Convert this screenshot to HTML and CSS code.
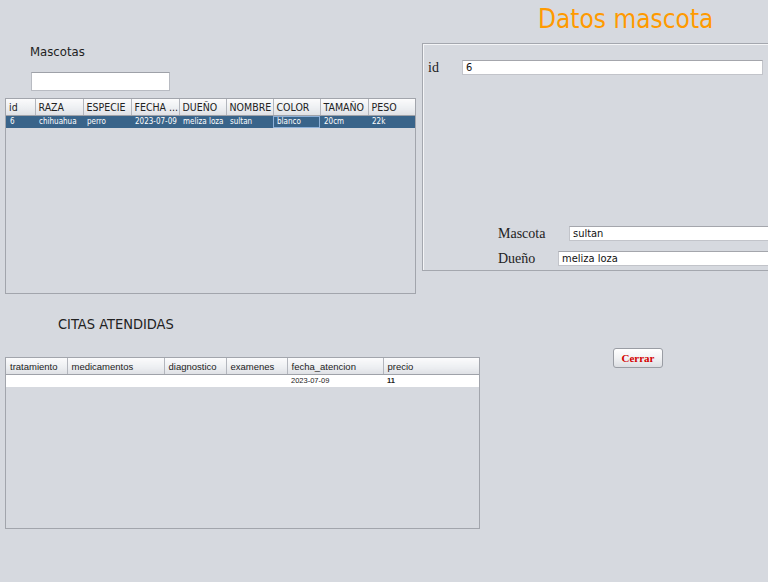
FILE: index.html
```html
<!DOCTYPE html>
<html>
<head>
  <title>Datos mascota</title>
  <link rel="stylesheet" href="styles.css">
</head>
<body>

  <div class="top">
    <div class="left">
      <div class="label-big">Mascotas</div>
      <input class="search" type="text">

      <div class="grid grid-pets">
        <table>
          <colgroup>
            <col style="width:29px"><col style="width:48px"><col style="width:48px"><col style="width:48px">
            <col style="width:47px"><col style="width:47px"><col style="width:47px"><col style="width:48px"><col>
          </colgroup>
          <thead>
            <tr>
              <th>id</th><th>RAZA</th><th>ESPECIE</th><th>FECHA ...</th><th>DUEÑO</th>
              <th>NOMBRE</th><th>COLOR</th><th>TAMAÑO</th><th>PESO</th>
            </tr>
          </thead>
          <tbody>
            <tr class="selected">
              <td>6</td><td>chihuahua</td><td>perro</td><td>2023-07-09</td><td>meliza loza</td>
              <td>sultan</td><td class="focus">blanco</td><td>20cm</td><td>22k</td>
            </tr>
          </tbody>
        </table>
      </div>
    </div>

    <div class="right">
      <div class="title">Datos mascota</div>
      <div class="panel">
        <div class="field">
          <span class="field-label w-id">id</span>
          <input class="field-input w-long" type="text" value="6">
        </div>
        <div class="field field-bottom">
          <span class="field-label w-mascota">Mascota</span>
          <input class="field-input w-wide" type="text" value="sultan">
        </div>
        <div class="field">
          <span class="field-label w-dueno">Dueño</span>
          <input class="field-input w-wide" type="text" value="meliza loza">
        </div>
      </div>
    </div>
  </div>

  <div class="bottom">
    <div class="left-wide">
      <div class="label-big citas">CITAS ATENDIDAS</div>

      <div class="grid grid-citas">
        <table>
          <colgroup>
            <col style="width:61px"><col style="width:97px"><col style="width:62px">
            <col style="width:61px"><col style="width:96px"><col>
          </colgroup>
          <thead>
            <tr>
              <th>tratamiento</th><th>medicamentos</th><th>diagnostico</th>
              <th>examenes</th><th>fecha_atencion</th><th>precio</th>
            </tr>
          </thead>
          <tbody>
            <tr class="plain">
              <td></td><td></td><td></td><td></td><td>2023-07-09</td><td class="strong">11</td>
            </tr>
          </tbody>
        </table>
      </div>
    </div>

    <div class="actions">
      <button class="btn-close">Cerrar</button>
    </div>
  </div>

</body>
</html>
```

FILE: styles.css
```css
html, body {
  margin: 0;
  padding: 0;
  width: 768px;
  height: 582px;
  overflow: hidden;
}
body {
  background-color: #d6d9df;
  font-family: "DejaVu Sans Condensed", "DejaVu Sans", sans-serif;
  color: #222;
}

/* top half */
.top {
  display: flex;
  height: 294px;
}
.left {
  width: 422px;
  flex: none;
  padding-left: 5px;
  box-sizing: border-box;
}
.label-big {
  font-size: 13px;
  line-height: 16px;
  margin: 44px 0 0 25px;
}
.search {
  display: block;
  box-sizing: border-box;
  width: 139px;
  height: 19px;
  margin: 12px 0 0 26px;
  padding: 0 3px;
  background: #fff;
  border: 1px solid #b8bbc2;
  border-top-color: #9ea1a8;
  outline: none;
}

/* tables */
.grid {
  box-sizing: border-box;
  border: 1px solid #a2a5ac;
  overflow: hidden;
}
.grid table {
  width: 100%;
  table-layout: fixed;
  border-collapse: collapse;
}
.grid th {
  height: 16px;
  padding: 0 0 0 3px;
  text-align: left;
  font-weight: normal;
  white-space: nowrap;
  overflow: hidden;
  color: #222;
  background: linear-gradient(#fbfbfc, #eceef1 60%, #dfe1e5);
  border-right: 1px solid #b3b6bd;
  border-bottom: 1px solid #9fa2a9;
}
.grid th:last-child {
  border-right: none;
}
.grid td {
  height: 12px;
  padding: 0 0 0 4px;
  font-size: 8px;
  line-height: 12px;
  white-space: nowrap;
  overflow: hidden;
  box-sizing: border-box;
}
.grid-pets {
  width: 411px;
  height: 196px;
  margin-top: 7px;
}
.grid-pets th {
  font-size: 10.5px;
}
.selected td {
  background-color: #39648a;
  color: #fff;
}
.selected td.focus {
  box-shadow: inset 0 0 0 1px #8db0d8;
}
.plain td {
  background-color: #fff;
  color: #222;
  font-family: "Liberation Sans", sans-serif;
  font-size: 7.5px;
}
.plain td.strong {
  font-weight: bold;
}

/* right side */
.right {
  flex: 1;
  min-width: 0;
  overflow: hidden;
}
.title {
  height: 43px;
  padding-left: 116px;
  font-size: 26px;
  line-height: 38px;
  color: #ff9a00;
  white-space: nowrap;
}
.panel {
  box-sizing: border-box;
  height: 228px;
  border: 1px solid #a4a7ae;
  border-right: none;
  box-shadow: inset 1px 1px 0 #f4f5f7;
  padding: 16px 0 4px 5px;
  display: flex;
  flex-direction: column;
  overflow: hidden;
}
.field {
  display: flex;
  align-items: center;
  height: 15px;
}
.field + .field {
  margin-top: 10px;
}
.field-bottom {
  margin-top: auto !important;
}
.field-label {
  font-family: "Liberation Serif", serif;
  font-size: 14px;
  color: #222;
  flex: none;
}
.w-id { width: 34px; }
.w-mascota { width: 71px; margin-left: 70px; }
.w-dueno { width: 60px; margin-left: 70px; }
.field-input {
  box-sizing: border-box;
  height: 15px;
  padding: 0 3px;
  font-family: "DejaVu Sans Condensed", "DejaVu Sans", sans-serif;
  font-size: 11px;
  color: #111;
  background: #fff;
  border: 1px solid #c2c4ca;
  border-top-color: #a4a6ac;
  outline: none;
  flex: none;
}
.w-long { width: 301px; }
.w-wide { width: 240px; }

/* bottom half */
.bottom {
  display: flex;
}
.left-wide {
  width: 480px;
  flex: none;
  padding-left: 5px;
  box-sizing: border-box;
}
.citas {
  margin: 22px 0 0 53px;
  font-size: 14.5px;
}
.grid-citas {
  width: 475px;
  height: 172px;
  margin-top: 25px;
}
.grid-citas th {
  font-family: "Liberation Sans", sans-serif;
  font-size: 9.5px;
  padding-left: 4px;
}
.actions {
  padding: 53px 0 0 133px;
}
.btn-close {
  width: 50px;
  height: 20px;
  padding: 0;
  border: 1px solid #9a9da4;
  border-radius: 3px;
  background: linear-gradient(#ffffff, #f1f2f4 50%, #dcdee2);
  font-family: "Liberation Serif", serif;
  font-weight: bold;
  font-size: 11px;
  color: #d40000;
}
```
